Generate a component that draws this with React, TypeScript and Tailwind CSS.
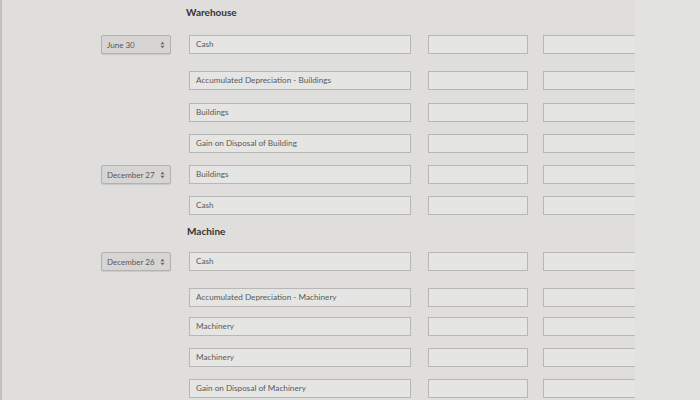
import React from "react";

const font = { fontFamily: "Lato, 'Open Sans', sans-serif" };

function Select({ label }: { label: string }) {
  return (
    <div className="flex h-[19px] w-[70px] items-center justify-between rounded-[2px] border border-[#b3b2b0] bg-[#d6d5d3] pl-[5px] pr-[5px] shadow-[0_1px_1px_rgba(0,0,0,0.1)]">
      <span className="text-[8px] text-[#585858]">{label}</span>
      <svg width="5" height="8" viewBox="0 0 5 8">
        <path d="M0.5 3.2 L2.5 0.8 L4.5 3.2 Z" fill="#666" />
        <path d="M0.5 4.8 L2.5 7.2 L4.5 4.8 Z" fill="#666" />
      </svg>
    </div>
  );
}

function Row({ date, account, mt }: { date?: string; account: string; mt: string }) {
  return (
    <div className={`flex items-center ${mt}`}>
      <div className="w-[88px] shrink-0">{date ? <Select label={date} /> : null}</div>
      <div className="flex h-[19px] w-[222px] shrink-0 items-center border border-[#b8b7b5] bg-[#e5e5e3] pl-[6px] text-[8.2px] text-[#5a5a5a]">
        {account}
      </div>
      <div className="ml-[17px] h-[19px] w-[100px] shrink-0 border border-[#b8b7b5] bg-[#e5e5e3]" />
      <div className="ml-[15px] h-[19px] w-[92px] shrink-0 border border-r-0 border-[#b8b7b5] bg-[#e5e5e3]" />
    </div>
  );
}

export default function App() {
  return (
    <div style={font} className="flex h-[400px] w-[700px] overflow-hidden bg-[#dddcda]">
      <div className="w-[2px] shrink-0 bg-[#c2c1bf]" />
      <div className="flex w-[633px] shrink-0 flex-col bg-[#dfdedc] pl-[99px]">
        <div className="ml-[85px] mt-[6px] text-[10px] font-bold leading-[12px] text-[#333]">Warehouse</div>
        <Row mt="mt-[17px]" date="June 30" account="Cash" />
        <Row mt="mt-[17px]" account="Accumulated Depreciation - Buildings" />
        <Row mt="mt-[13px]" account="Buildings" />
        <Row mt="mt-[12px]" account="Gain on Disposal of Building" />
        <Row mt="mt-[12px]" date="December 27" account="Buildings" />
        <Row mt="mt-[12px]" account="Cash" />
        <div className="ml-[86px] mt-[10px] text-[10px] font-bold leading-[12px] text-[#333]">Machine</div>
        <Row mt="mt-[15px]" date="December 26" account="Cash" />
        <Row mt="mt-[17px]" account="Accumulated Depreciation - Machinery" />
        <Row mt="mt-[10px]" account="Machinery" />
        <Row mt="mt-[12px]" account="Machinery" />
        <Row mt="mt-[12px]" account="Gain on Disposal of Machinery" />
      </div>
      <div className="flex-1 bg-[#e2e2e0]" />
    </div>
  );
}
